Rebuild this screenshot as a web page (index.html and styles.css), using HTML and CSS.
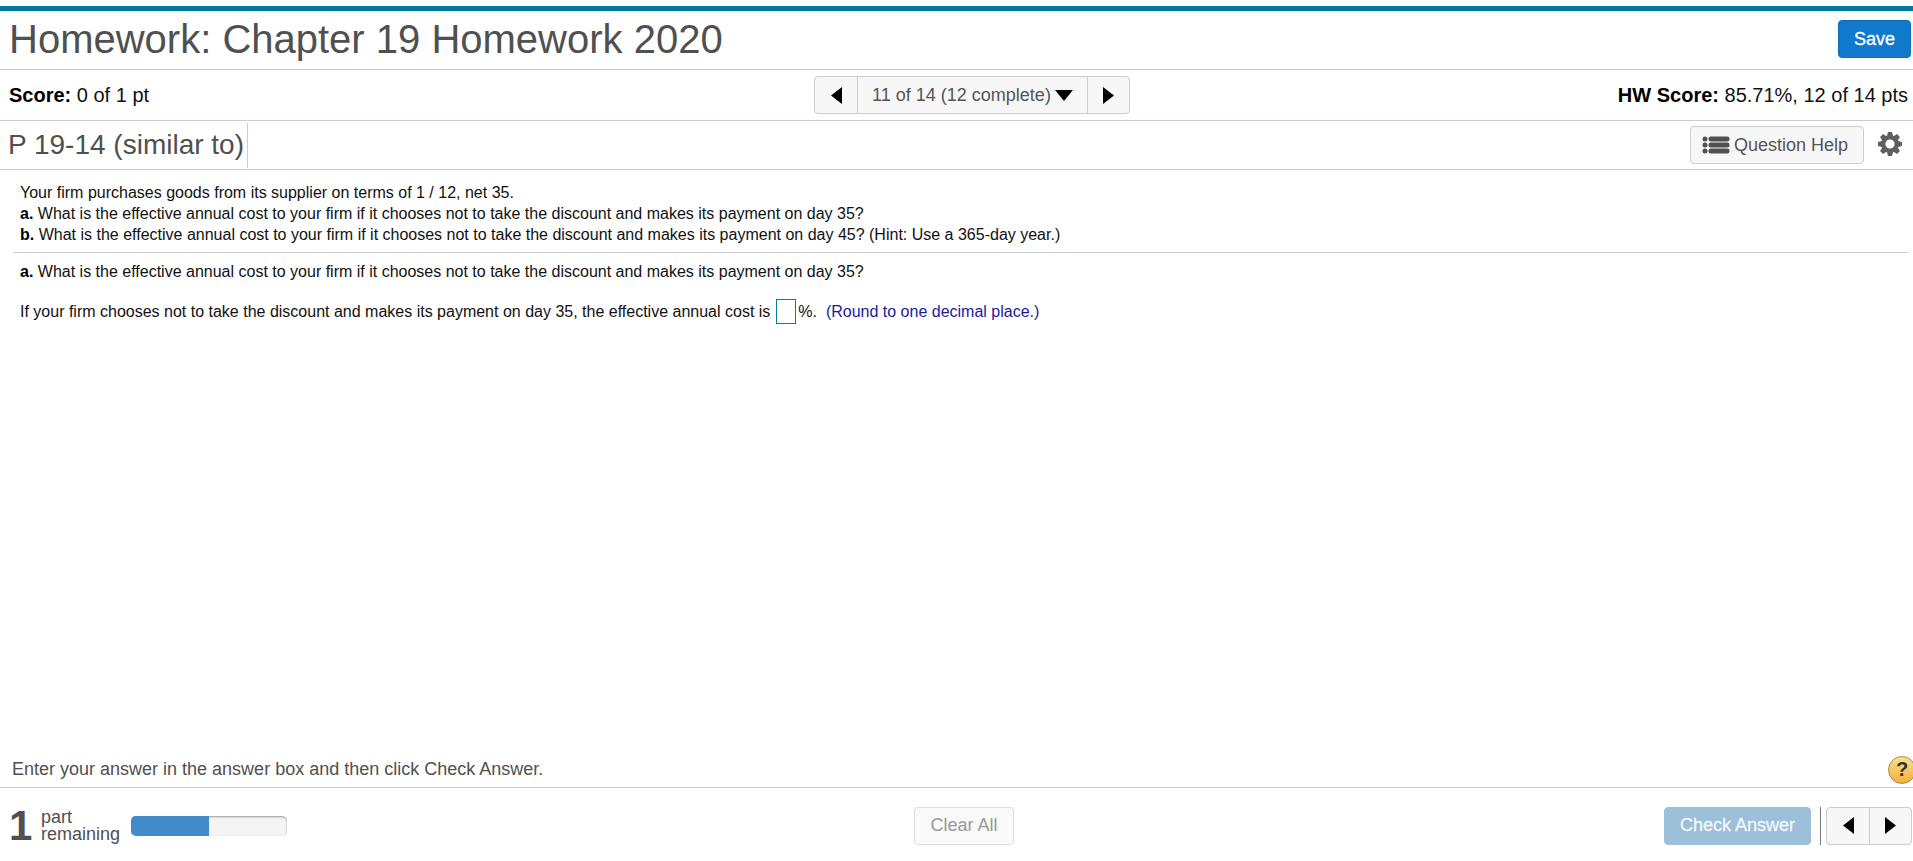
FILE: index.html
```html
<!DOCTYPE html>
<html lang="en">
<head>
  <meta charset="UTF-8" />
  <meta name="viewport" content="width=device-width, initial-scale=1.0" />
  <title>Homework: Chapter 19 Homework 2020</title>
  <link rel="stylesheet" href="styles.css">
</head>
<body>
  <header class="header">
    <h1>Homework: Chapter 19 Homework 2020</h1>
    <button class="button primary">Save</button>
  </header>

  <div class="score-bar">
    <div><b>Score:</b> 0 of 1 pt</div>
    <div class="pager">
      <button class="arrow" aria-label="Previous question">
        <svg width="11" height="17" viewBox="0 0 11 17"><path d="M11 0v17L0 8.5z" /></svg>
      </button>
      <button class="current">11 of 14 (12 complete)
        <svg width="18" height="11" viewBox="0 0 18 11"><path d="M0 0h18L9 11z" /></svg>
      </button>
      <button class="arrow" aria-label="Next question">
        <svg width="11" height="17" viewBox="0 0 11 17"><path d="M0 0v17l11-8.5z" /></svg>
      </button>
    </div>
    <div class="hw-score"><b>HW Score:</b> 85.71%, 12 of 14 pts</div>
  </div>

  <div class="question-bar">
    <h2>P 19-14 (similar to)</h2>
    <div class="tools">
      <button class="button help">
        <svg width="28" height="18" viewBox="0 0 28 18">
          <circle cx="3" cy="3" r="2.5" /><circle cx="3" cy="9" r="2.5" /><circle cx="3" cy="15" r="2.5" />
          <rect x="6.5" y="0.5" width="21" height="5" rx="2.2" />
          <rect x="6.5" y="6.5" width="21" height="5" rx="2.2" />
          <rect x="6.5" y="12.5" width="21" height="5" rx="2.2" />
        </svg>
        Question Help
      </button>
      <button class="gear" aria-label="Settings">
        <svg width="24" height="24" viewBox="0 0 24 24">
          <circle cx="12" cy="12" r="6.8" fill="none" stroke="#5f5f5f" stroke-width="4.4" />
          <g>
            <path id="tooth" d="M9 4L10 0h4l1 4zM9 20l1 4h4l1-4z" />
            <use href="#tooth" transform="rotate(45 12 12)" />
            <use href="#tooth" transform="rotate(90 12 12)" />
            <use href="#tooth" transform="rotate(135 12 12)" />
          </g>
        </svg>
      </button>
    </div>
  </div>

  <main class="question">
    <div class="problem">
      <p>Your firm purchases goods from its supplier on terms of 1 / 12, net 35.</p>
      <p><b>a.</b> What is the effective annual cost to your firm if it chooses not to take the discount and makes its payment on day 35?</p>
      <p><b>b.</b> What is the effective annual cost to your firm if it chooses not to take the discount and makes its payment on day 45? (Hint: Use a 365-day year.)</p>
    </div>
    <div class="part">
      <p><b>a.</b> What is the effective annual cost to your firm if it chooses not to take the discount and makes its payment on day 35?</p>
      <p class="answer-line">
        <label for="answer">If your firm chooses not to take the discount and makes its payment on day 35, the effective annual cost is</label>
        <input type="text" id="answer" class="answer" />%.&nbsp; <span class="hint">(Round to one decimal place.)</span>
      </p>
    </div>
  </main>

  <div class="instructions">
    <span>Enter your answer in the answer box and then click Check Answer.</span>
    <button class="help-circle" aria-label="Help">?</button>
  </div>

  <footer class="footer">
    <div class="parts">
      <span class="count">1</span>
      <label class="remaining" for="partProgress">part<br>remaining</label>
      <progress id="partProgress" value="1" max="2"></progress>
    </div>
    <button class="button clear" disabled>Clear All</button>
    <div class="actions">
      <button class="button primary" disabled>Check Answer</button>
      <div class="separator"></div>
      <div class="pager">
        <button class="arrow" aria-label="Previous">
          <svg width="11" height="17" viewBox="0 0 11 17"><path d="M11 0v17L0 8.5z" /></svg>
        </button>
        <button class="arrow" aria-label="Next">
          <svg width="11" height="17" viewBox="0 0 11 17"><path d="M0 0v17l11-8.5z" /></svg>
        </button>
      </div>
    </div>
  </footer>
</body>
</html>
```
FILE: styles.css
```css
* {
  box-sizing: border-box;
}
body {
  margin: 0;
  padding-top: 6px;
  min-height: 100vh;
  display: flex;
  flex-direction: column;
  font-family: "Liberation Sans", Arial, sans-serif;
  color: #111;
  background: #fff;
  overflow-x: hidden;
}
h1, h2, p {
  margin: 0;
}
button {
  font-family: inherit;
  font-size: 18px;
  cursor: pointer;
}
svg {
  flex: none;
}

.header {
  display: flex;
  align-items: center;
  justify-content: space-between;
  height: 64px;
  padding: 0 2px 2px 9px;
  border-top: 5px solid #007a9c;
  border-bottom: 1px solid #c8ccda;
}
.header h1 {
  font-size: 40px;
  font-weight: normal;
  line-height: 56px;
  color: #505050;
}

.button {
  height: 38px;
  padding: 0 15px;
  border: 1px solid #ccc;
  border-radius: 4px;
  background: #f7f7f7;
  color: #555;
}
.primary {
  border-color: #0d6cb9;
  background: #1079cc;
  color: #fff;
  -webkit-text-stroke: 0.3px;
}
.primary:disabled {
  border-color: #9cbfda;
  background: #9cbfda;
  color: #f3f7fa;
}

.score-bar {
  display: grid;
  grid-template-columns: 1fr auto 1fr;
  align-items: center;
  height: 51px;
  padding: 0 5px 0 9px;
  border-bottom: 1px solid #c8ccda;
  font-size: 20px;
}
.score-bar .pager {
  margin-left: 27px;
}
.score-bar b {
  color: #000;
}
.hw-score {
  text-align: right;
}

.pager {
  display: flex;
  height: 38px;
  border: 1px solid #ccc;
  border-radius: 4px;
  background: #f7f7f7;
}
.pager button {
  display: flex;
  align-items: center;
  justify-content: center;
  padding: 0;
  border: none;
  background: none;
  color: #555;
}
.pager button + button {
  border-left: 1px solid #ccc;
}
.pager .arrow {
  width: 42px;
}
.pager .current {
  gap: 4px;
  padding: 0 14px;
}

.question-bar {
  display: flex;
  align-items: center;
  justify-content: space-between;
  height: 49px;
  padding: 0 11px 0 8px;
  border-bottom: 1px solid #c8ccda;
}
.question-bar h2 {
  padding: 0 3px 2px 0;
  border-right: 1px solid #c8ccda;
  font-size: 28px;
  font-weight: normal;
  line-height: 43px;
  color: #505050;
}
.tools {
  display: flex;
  align-items: center;
  gap: 14px;
}
.help {
  display: flex;
  align-items: center;
  gap: 4px;
  padding: 0 15px 0 11px;
}
.help svg {
  fill: #505050;
}
.gear {
  display: flex;
  padding: 0 0 2px;
  border: none;
  background: none;
}
.gear svg {
  fill: #5f5f5f;
}

.question {
  flex: 1;
  padding: 12px 5px 0 13px;
  font-size: 16px;
  line-height: 21px;
}
.question b {
  color: #000;
}
.problem {
  padding: 0 7px 7px;
  border-bottom: 1px solid #c8ccda;
}
.part {
  padding: 8px 7px;
}
.answer-line {
  display: flex;
  flex-wrap: wrap;
  align-items: center;
  margin-top: 17px;
  white-space: pre-wrap;
}
.answer {
  width: 20px;
  height: 25px;
  margin: 0 2px 0 6px;
  padding: 0;
  border: 1px solid #007fa3;
  font-size: 16px;
}
.hint {
  color: #1a1a9c;
}

.instructions {
  display: flex;
  align-items: center;
  justify-content: space-between;
  height: 34px;
  padding: 0 0 2px 12px;
  border-bottom: 1px solid #c8ccda;
  font-size: 18px;
  color: #505050;
}
.help-circle {
  flex: none;
  width: 28px;
  height: 28px;
  margin-right: -3px;
  padding: 0;
  border: 1px solid #a98a45;
  border-radius: 50%;
  background: linear-gradient(#fbe08c, #f3b03c);
  font-size: 20px;
  font-weight: bold;
  color: #333;
}

.footer {
  display: grid;
  grid-template-columns: 1fr auto 1fr;
  align-items: center;
  height: 73px;
  padding: 2px 1px 0 9px;
}
.parts {
  display: flex;
  align-items: center;
  color: #505050;
}
.count {
  width: 32px;
  font-size: 42px;
  font-weight: bold;
}
.remaining {
  margin-right: 11px;
  font-size: 18px;
  line-height: 17px;
}
progress {
  appearance: none;
  width: 156px;
  height: 20px;
  border: none;
}
progress::-webkit-progress-bar {
  overflow: hidden;
  border-radius: 5px;
  background: #f4f4f4;
  box-shadow: inset 0 1px 2px #999;
}
progress::-webkit-progress-value {
  background: #428bca;
}
.clear {
  margin-left: 7px;
}
.clear:disabled {
  border-color: #ddd;
  background: #fafafa;
  color: #999;
}
.actions {
  display: flex;
  align-items: center;
  justify-content: flex-end;
}
.separator {
  width: 1px;
  height: 38px;
  margin: 0 5px 0 9px;
  background: #777;
}
```
